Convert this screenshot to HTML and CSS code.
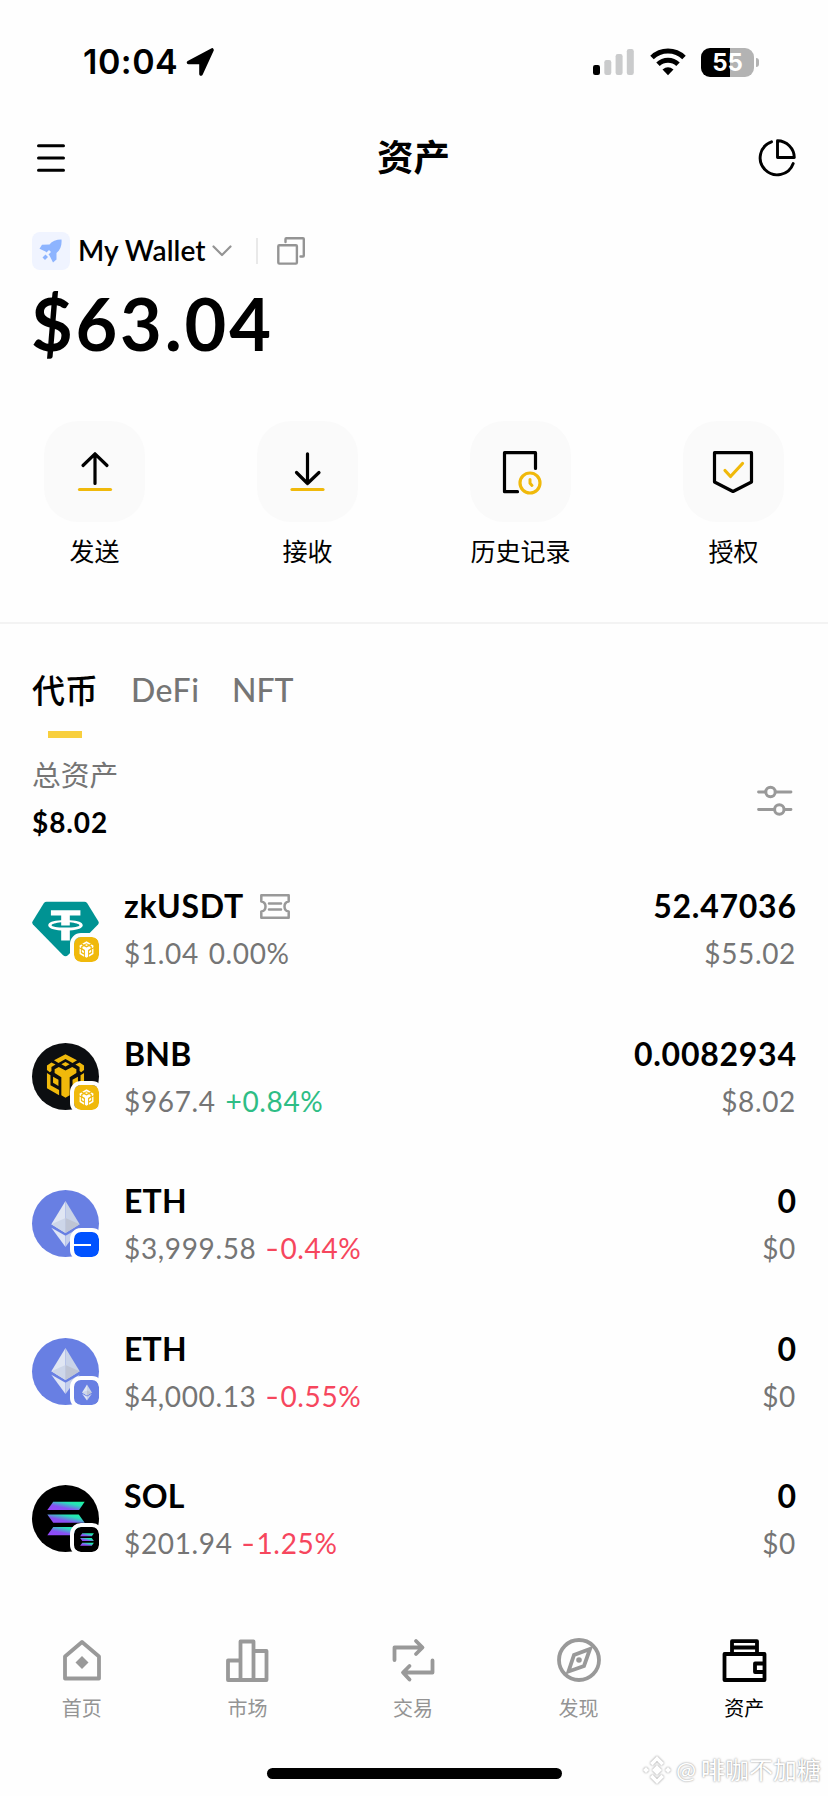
FILE: index.html
```html
<!DOCTYPE html>
<html lang="zh-CN">
<head>
<meta charset="utf-8">
<title>资产</title>
<link rel="stylesheet" href="styles.css">
</head>
<body>
<svg class="defs" aria-hidden="true">
  <defs>
    <linearGradient id="sol" x1="0" y1="1" x2="1" y2="0">
      <stop offset="0" stop-color="#9945ff"/><stop offset=".35" stop-color="#8752f3"/><stop offset=".7" stop-color="#28e0b9"/><stop offset="1" stop-color="#19fb9b"/>
    </linearGradient>
    <symbol id="cube" viewBox="40 32 122 142">
      <path d="M101 35 137 54 123 62 101 50 79 62 65 54Z"/>
      <path d="M101 59 114 66 101 73 88 66Z"/>
      <path d="M43 70 57 61 70 67 57 75V87L52 91 43 84Z"/>
      <path d="M159 70 145 61 132 67 145 75V87L150 91 159 84Z"/>
      <path d="M67 82 80 75 101 86 122 75 135 82V94L114 107V163L101 171 88 163V107L67 94Z"/>
      <path d="M43 94 54 101V132L81 147V163L43 141Z"/>
      <path d="M159 94 148 101V132L121 147V163L159 141Z"/>
      <path d="M62 105 79 115V134L62 124Z"/>
      <path d="M140 105 123 115V134L140 124Z"/>
    </symbol>
    <symbol id="ether" viewBox="57 29 88 144">
      <path fill="#e0e6f3" d="M101 31V128L58 102Z"/><path fill="#c9d3e8" d="M101 31V128L144 102Z"/>
      <path fill="#cdd6e9" d="M58 102 101 83V128Z"/><path fill="#bec4d4" d="M144 102 101 83V128Z"/>
      <path fill="#dfe5f5" d="M58 112 101 137V171Z"/><path fill="#c6d0ec" d="M144 112 101 137V171Z"/>
    </symbol>
    <symbol id="solana" viewBox="43 50 116 104">
      <path d="M62 51H158L141 76H44Z"/><path d="M44 90H140L158 115H62Z"/><path d="M62 128H158L141 153H44Z"/>
    </symbol>
  </defs>
</svg>

<main class="screen">
  <header class="status">
    <div class="status-left">
      <span class="clock">10:04</span>
      <svg class="locate" viewBox="0 0 28 28"><path d="M26 2 15 26V14.500H2.500Z" fill="#000" stroke="#000" stroke-width="3.600" stroke-linejoin="round"/></svg>
    </div>
    <div class="status-right">
      <svg class="signal" viewBox="0 0 41 28"><rect y="17" width="7" height="10" rx="2.200"/><g fill="#cacbcc"><rect x="11.300" y="12" width="7" height="15" rx="2.200"/><rect x="22.600" y="6" width="7" height="21" rx="2.200"/><rect x="33.800" y="1" width="7" height="26" rx="2.200"/></g></svg>
      <svg class="wifi" viewBox="0 0 36 28"><g fill="none" stroke="#000" stroke-width="5"><path d="M2 9.500a23 23 0 0 1 32 0"/><path d="M8 16.300a14.500 14.500 0 0 1 20 0"/></g><path d="M12.500 21.500q5.500-4.500 11 0L18 27.200Z"/></svg>
      <div class="battery"><span>55</span></div><i class="battery-tip"></i>
    </div>
  </header>

  <div class="titlebar">
    <svg class="menu" viewBox="0 0 28 28" stroke="#000" stroke-width="3" stroke-linecap="round"><path d="M1.500 1.800h25M1.500 14h25M1.500 26.200h25"/></svg>
    <h1>资产</h1>
    <svg class="pie" viewBox="0 0 38 38" fill="none" stroke="#000" stroke-width="2.900" stroke-linecap="round" stroke-linejoin="round"><path d="M13.500 2.800A17 17 0 1 0 35.200 24.500M19.500 1.800V18.500H36.300A17 17 0 0 0 19.500 1.800Z"/></svg>
  </div>

  <section class="wallet">
    <span class="avatar"><svg viewBox="0 0 24 24" fill="#8db4ff"><path d="M22.500.500C17 .500 13 2 10.500 5.500L3 5.800.500 9.800 6.500 12.500 10.500 16.500 14 23.500 17.500 20.500V14C21.500 11 23 6 22.500.500Z"/><path d="M3.500 18.500 6.500 15.500 9 18 6 21Z"/><path d="m7 14 3-3 2 2-3 3Z" fill="#f0f4ff"/></svg></span>
    <span class="wallet-name">My Wallet</span>
    <svg class="chevron" viewBox="0 0 20 12" fill="none" stroke="#949494" stroke-width="2.200" stroke-linecap="round" stroke-linejoin="round"><path d="m1.500 1.500 8.500 8.500 8.500-8.500"/></svg>
    <i class="bar"></i>
    <svg class="copy" viewBox="0 0 28 28" fill="none" stroke="#949494" stroke-width="2.400" stroke-linejoin="round" stroke-linecap="round"><rect x="1.300" y="8.300" width="18.600" height="18.300" rx="1"/><path d="M8.500 5V2Q8.500 1.300 9.300 1.300H26Q26.800 1.300 26.800 2V18.500Q26.800 19.500 26 19.500H23.500"/></svg>
  </section>
  <div class="balance">$63.04</div>

  <nav class="actions">
    <div class="action"><span class="tile"><svg viewBox="0 0 48 48"><path d="M24 37.500V8M12 19.500 24 7.800 36 19.500" class="ink"/><path d="M8.500 43.500H39.500" class="gold"/></svg></span>发送</div>
    <div class="action"><span class="tile"><svg viewBox="0 0 48 48"><path d="M23.500 7.800V37.500M12.500 26.500 23.500 37.500 35 26.500" class="ink"/><path d="M8 43.500H39" class="gold"/></svg></span>接收</div>
    <div class="action"><span class="tile"><svg viewBox="0 0 48 48"><path d="M38.500 22.500V6.700H7.500V45.700H20.500" class="ink"/><circle cx="33" cy="37" r="10" class="gold"/><path d="M33 33.500V37.300L35 39.500" class="gold thin"/></svg></span>历史记录</div>
    <div class="action"><span class="tile"><svg viewBox="0 0 48 48"><path d="M4.500 6.700H41.500V36L23 45.500 4.500 36Z" class="ink"/><path d="M15 24.500 20.500 30.500 32.500 17.500" class="gold"/></svg></span>授权</div>
  </nav>

  <section class="tabs">
    <div class="tab on">代币</div><div class="tab defi">DeFi</div><div class="tab nft">NFT</div>
  </section>

  <section class="summary">
    <div><div class="caption">总资产</div><div class="total">$8.02</div></div>
    <svg class="filter" viewBox="0 0 36 32" fill="none" stroke="#999" stroke-linecap="round"><path stroke-width="2.800" d="M1.500 7H8M19 7H34M1.500 24.500H17M28 24.500H34"/><g stroke-width="3"><circle cx="13.500" cy="7" r="4.700"/><circle cx="22.300" cy="24.500" r="4.700"/></g></svg>
  </section>

  <ul class="coins">
    <li class="coin">
      <div class="logo"><svg viewBox="0 0 202 202"><path fill="#009393" d="M44 20H158Q163 20 166 24L200 79Q203 84 199 89L109 181Q101 189 93 181L3 89Q-1 84 2 79L36 24Q39 20 44 20Z"/><path fill="#fff" d="M57 46H146V62H114V76C139 77 153 83 153 91S139 105 114 107V137H88V107C63 105 49 99 49 91S63 77 88 76V62H57ZM88 82C71 84 59 87 59 91S75 98 101 98 143 95 143 91 131 84 114 82V92H88Z"/></svg>
        <span class="chain bsc"><svg class="c-cube"><use href="#cube"/></svg></span></div>
      <div class="info"><div class="name wide">zkUSDT <svg class="ticket" viewBox="0 0 30 25" fill="none" stroke="#999" stroke-width="2.500" stroke-linejoin="round" stroke-linecap="round"><path d="M1.300 1.300H28.700V7.500Q24.500 8 24.500 12.500T28.700 17.500V23.700H1.300V17.500Q5.500 17 5.500 12.500T1.300 7.500ZM9 9.500H21M9 15.500H21"/></svg></div><div class="price">$1.04 <span>0.00%</span></div></div>
      <div class="hold"><div class="amount">52.47036</div><div class="price">$55.02</div></div>
    </li>
    <li class="coin">
      <div class="logo dark"><svg class="l-cube"><use href="#cube"/></svg><span class="chain bsc"><svg class="c-cube"><use href="#cube"/></svg></span></div>
      <div class="info"><div class="name">BNB</div><div class="price">$967.4 <span class="up">+0.84%</span></div></div>
      <div class="hold"><div class="amount">0.0082934</div><div class="price">$8.02</div></div>
    </li>
    <li class="coin">
      <div class="logo eth"><svg class="l-eth"><use href="#ether"/></svg><span class="chain base"><i></i></span></div>
      <div class="info"><div class="name">ETH</div><div class="price">$3,999.58 <span class="down"><b>-</b>0.44%</span></div></div>
      <div class="hold"><div class="amount">0</div><div class="price">$0</div></div>
    </li>
    <li class="coin">
      <div class="logo eth"><svg class="l-eth"><use href="#ether"/></svg><span class="chain eth"><svg class="c-eth"><use href="#ether"/></svg></span></div>
      <div class="info"><div class="name">ETH</div><div class="price">$4,000.13 <span class="down"><b>-</b>0.55%</span></div></div>
      <div class="hold"><div class="amount">0</div><div class="price">$0</div></div>
    </li>
    <li class="coin">
      <div class="logo black"><svg class="l-sol" fill="url(#sol)"><use href="#solana"/></svg><span class="chain black"><svg class="c-sol" fill="url(#sol)"><use href="#solana"/></svg></span></div>
      <div class="info"><div class="name">SOL</div><div class="price">$201.94 <span class="down"><b>-</b>1.25%</span></div></div>
      <div class="hold"><div class="amount">0</div><div class="price">$0</div></div>
    </li>
  </ul>

  <nav class="dock">
    <div class="item"><svg viewBox="0 0 48 48"><path d="M7 21.500 24 7 41 21.500V43.500H7Z"/><path class="fill" d="M24 21 30.500 27.500 24 34 17.500 27.500Z"/></svg>首页</div>
    <div class="item"><svg viewBox="0 0 48 48"><path d="M5 25.500H17.500V45H5ZM17.500 6.500H30.500V45H17.500ZM30.500 16H43.500V45H30.500Z"/></svg>市场</div>
    <div class="item"><svg viewBox="0 0 48 48"><path class="cap" d="M5.500 25V12.500H32M27 6 33.500 12.500 27 19M43.500 25.500V37.500H15M20.500 31 14 37.500 20.500 44.500"/></svg>交易</div>
    <div class="item"><svg viewBox="0 0 48 48"><circle cx="24" cy="25" r="20"/><path class="sharp" d="M35 14 29 31 13.500 36.500 19 20Z"/><circle class="fill" cx="24" cy="25" r="2.800"/></svg>发现</div>
    <div class="item active"><svg viewBox="0 0 48 48"><path d="M4.500 19H44.500V45H4.500ZM12 19V6.200H37V19M12 12.500H37M44.500 28.500H35V37H44.500"/></svg>资产</div>
  </nav>
  <div class="home"></div>

  <div class="mark">
    <svg viewBox="0 0 28 28" fill="#fff"><path d="M14 0 21 7 18.500 9.500 14 5 9.500 9.500 7 7ZM14 28 7 21 9.500 18.500 14 23 18.500 18.500 21 21ZM3 11 6 14 3 17 0 14ZM25 11 28 14 25 17 22 14ZM14 9 19 14 14 19 9 14Z"/></svg>
    <span>@</span><span>啡咖不加糖</span>
  </div>
</main>
</body>
</html>
```
FILE: styles.css
```css
* { box-sizing: border-box; }
body { margin: 0; background: #fefefe; color: #000; font-family: Lato, "Noto Sans CJK SC", sans-serif; }
svg { display: block; flex: none; }
.defs { position: absolute; width: 0; height: 0; }
.screen { position: relative; width: 828px; height: 1796px; overflow: hidden; }

/* Status bar */
.status { height: 124px; padding: 0 69px 0 83px; display: flex; align-items: center; justify-content: space-between; }
.status-left, .status-right { display: flex; align-items: center; }
.clock { font: 600 34px/40px Inter, sans-serif; letter-spacing: .5px; }
.locate { width: 28px; height: 28px; margin-left: 8px; }
.signal { width: 41px; height: 28px; margin-right: 16px; }
.wifi { width: 36px; height: 28px; margin-right: 15px; }
.battery { width: 53px; height: 29px; border-radius: 9px; background: linear-gradient(90deg, #000 55%, #b3b3b3 55%); color: #fff; font: 700 24px/29px Inter, sans-serif; text-align: center; }
.battery-tip { width: 3px; height: 9px; margin-left: 2px; border-radius: 0 4px 4px 0; background: #b3b3b3; }

/* Title bar */
.titlebar { height: 68px; padding: 0 32px 0 37px; display: grid; grid-template-columns: 38px 1fr 38px; align-items: center; }
.menu { width: 28px; height: 28px; }
.titlebar h1 { margin: -2px 0 0; text-align: center; font-size: 36.5px; line-height: 44px; font-weight: 700; padding-right: 6px; }
.pie { width: 38px; height: 38px; }

/* Wallet */
.wallet { margin-top: 40px; height: 38px; padding-left: 32px; display: flex; align-items: center; }
.avatar { width: 38px; height: 38px; border-radius: 8px; background: #f0f4ff; display: flex; align-items: center; justify-content: center; }
.avatar svg { width: 24px; height: 24px; }
.wallet-name { margin: -2px 0 0 8px; width: 127px; font-size: 28px; line-height: 36px; font-weight: 600; letter-spacing: .1px; white-space: nowrap; }
.chevron { width: 20px; height: 12px; margin-left: 7px; }
.bar { width: 2px; height: 26px; margin: 0 19px 0 24px; background: #e9e9e9; }
.copy { width: 28px; height: 28px; }
.balance { height: 88px; margin-top: 9px; padding-left: 31px; font-size: 72px; line-height: 88px; font-weight: 700; letter-spacing: 2.8px; }

/* Quick actions */
.actions { margin-top: 54px; height: 203px; padding: 0 44px; display: flex; justify-content: space-between; border-bottom: 2px solid #f3f3f3; }
.action { width: 101px; display: flex; flex-direction: column; align-items: center; font-size: 25px; line-height: 36px; white-space: nowrap; }
.tile { width: 101px; height: 101px; border-radius: 34px; background: #fafafa; display: flex; align-items: center; justify-content: center; margin-bottom: 11px; }
.tile svg { width: 48px; height: 48px; overflow: visible; margin-top: -4px; }
.ink, .gold { fill: none; stroke: #000; stroke-width: 3.2; stroke-linecap: round; stroke-linejoin: round; }
.gold { stroke: #f0b90b; }
.thin { stroke-width: 3; }

/* Tabs */
.tabs { height: 114px; padding: 44px 0 0 32px; display: flex; font-size: 32px; line-height: 44px; font-weight: 500; color: #757575; }
.tab.on { width: 66px; color: #000; font-size: 33px; display: flex; flex-direction: column; align-items: center; }
.tab.on::after { content: ""; width: 34px; height: 7px; margin-top: 19px; background: #f8cf3d; }
.defi { margin-left: 33px; width: 69px; letter-spacing: .5px; }
.nft { margin-left: 32px; }

/* Summary */
.summary { height: 110px; padding: 19px 35px 0 32px; display: flex; justify-content: space-between; }
.caption { font-size: 28.8px; line-height: 36px; font-weight: 400; color: #757575; }
.total { margin-top: 11px; font-size: 28px; line-height: 36px; font-weight: 700; letter-spacing: .9px; }
.filter { width: 36px; height: 32px; margin-top: 28px; }

/* Coins */
.coins { margin: 46px 0 0; padding: 0; list-style: none; }
.coin { height: 147.6px; padding: 0 32px; display: flex; }
.logo { position: relative; width: 67px; height: 67px; margin-top: 1px; border-radius: 50%; display: flex; align-items: center; justify-content: center; flex: none; }
.dark { background: #0c0e11; }
.eth { background: #687fe3; }
.black { background: #000; }
.l-cube { width: 39px; height: 46px; fill: #f0b90b; }
.l-eth { width: 29px; height: 48px; }
.l-sol { width: 38px; height: 35px; }
.chain { position: absolute; right: -4px; bottom: -4px; width: 33px; height: 33px; border: 4px solid #fefefe; border-radius: 11px; display: flex; align-items: center; justify-content: center; background-clip: padding-box; }
.bsc { background-color: #f0b90b; }
.base { background-color: #0052ff; justify-content: flex-start; }
.base i { width: 17px; height: 2px; background: #fff; }
.c-cube { width: 15px; height: 17px; fill: #fff; }
.c-eth { width: 10px; height: 17px; }
.c-sol { width: 14px; height: 13px; }
.info { margin-left: 25px; flex: 1; white-space: nowrap; }
.hold { text-align: right; }
.name, .amount { height: 47px; line-height: 24px; font-size: 32px; font-weight: 700; }
.amount { letter-spacing: .75px; margin-right: -.75px; }
.name { display: flex; gap: 16px; letter-spacing: .2px; }
.name.wide { letter-spacing: .75px; }
.ticket { width: 30px; height: 25px; }
.price { font-size: 28px; line-height: 24px; font-weight: 400; color: #757575; letter-spacing: .65px; }
.price span { margin-left: 2px; }
.price b { display: inline-block; font-weight: 400; transform: scaleX(1.35); margin: 0 2px 0 1px; }
.price .up { color: #2ebd85; }
.price .down { color: #f6465d; }

/* Bottom navigation */
.dock { position: absolute; left: -1px; right: 1px; top: 1635px; display: flex; }
.item { flex: 1; display: flex; flex-direction: column; align-items: center; font-size: 20px; line-height: 28px; font-weight: 400; color: #949494; }
.item svg { width: 48px; height: 48px; margin-bottom: 11px; fill: none; stroke: #999; stroke-width: 3.8; stroke-linejoin: round; }
.item .fill { fill: #999; stroke: none; }
.item .cap { stroke-linecap: round; }
.item .sharp { stroke-linejoin: miter; }
.item.active { color: #000; }
.item.active svg { stroke: #000; }
.home { position: absolute; left: 267px; top: 1768px; width: 295px; height: 11px; border-radius: 6px; background: #000; }

/* Watermark */
.mark { position: absolute; left: 643px; top: 1753px; display: flex; align-items: center; gap: 5px; color: #fff; font-size: 24px; line-height: 34px; text-shadow: 0 0 2px #777; white-space: nowrap; }
.mark svg { width: 28px; height: 28px; filter: drop-shadow(0 0 1px #888); }
```
